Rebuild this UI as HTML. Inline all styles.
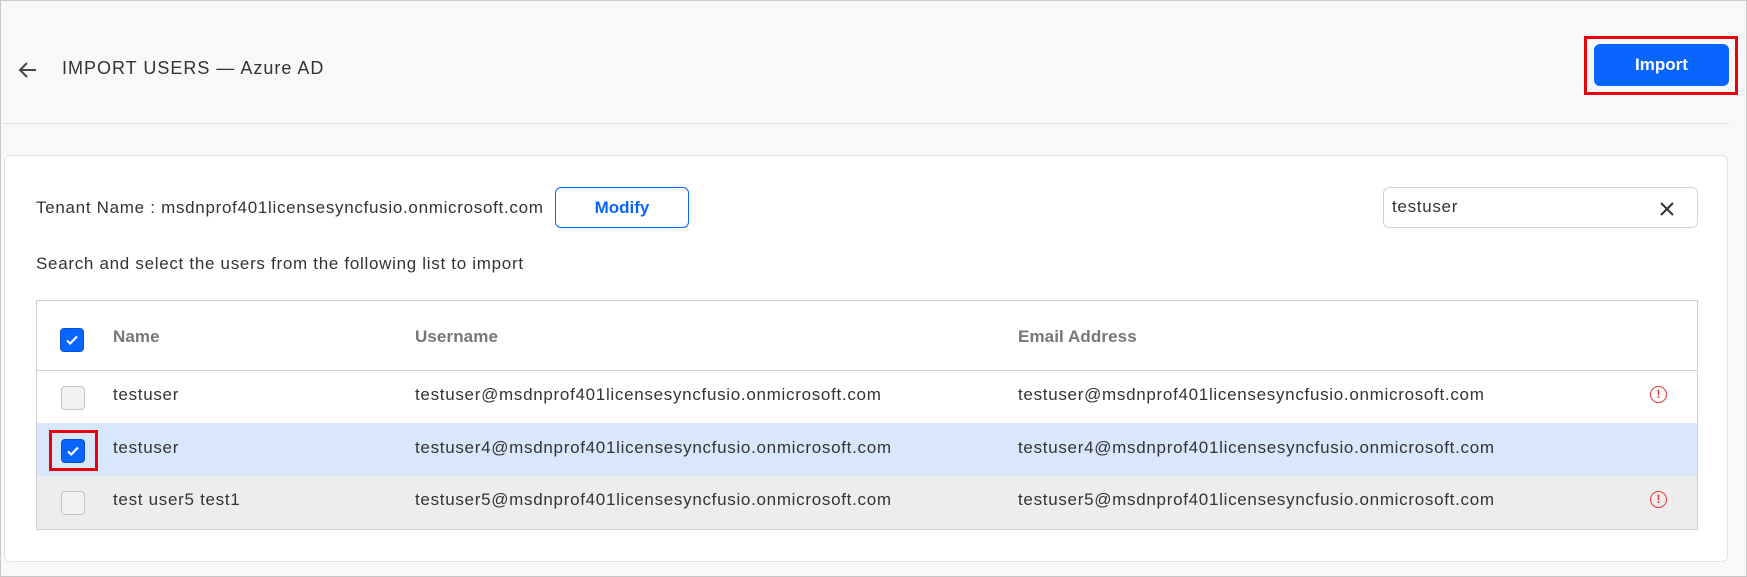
<!DOCTYPE html>
<html><head><style>
*{box-sizing:border-box;margin:0;padding:0}
body{width:1747px;height:577px;background:#fff;font-family:"Liberation Sans",Arial,sans-serif;color:#333;position:relative;overflow:hidden}
.frame{position:absolute;left:0;top:0;width:1747px;height:577px;border:1px solid #c8c8c8;background:#f8f8f8}
.abs{position:absolute}
.t{position:absolute;white-space:nowrap;font-size:17px;line-height:20px;letter-spacing:0.7px}
.h{color:#777;font-weight:bold;letter-spacing:0.1px}
.cb{position:absolute;width:24px;height:24px;border-radius:4px;border:1px solid #c4c4c4;background:#f2f2f2}
.cb.on{background:#0866ff;border-color:#0552d6}
.cb.on svg{position:absolute;left:3px;top:3px}
.warn{position:absolute;width:17px;height:17px;border:1.6px solid #e83a3a;border-radius:50%;color:#e83a3a;font-size:12px;line-height:14px;text-align:center;font-weight:bold}
</style></head><body>
<div class="frame"></div>
<svg class="abs" style="left:16px;top:58px" width="24" height="24" viewBox="0 0 24 24"><path d="M20 12H5M11 5l-7 7 7 7" fill="none" stroke="#444" stroke-width="2"/></svg>
<div class="t" style="left:62px;top:57px;font-size:18px;line-height:22px;letter-spacing:1px;color:#333">IMPORT USERS — Azure AD</div>
<div class="abs" style="left:3px;top:123px;width:1726px;height:1px;background:#e2e2e2"></div>
<div class="abs" style="left:1584px;top:36px;width:154px;height:59px;border:3px solid #e8000b"></div>
<div class="abs" style="left:1594px;top:44px;width:135px;height:42px;background:#0866ff;border-radius:6px;color:#fff;font-weight:bold;font-size:17px;line-height:42px;text-align:center">Import</div>
<div class="abs" style="left:4px;top:155px;width:1724px;height:407px;background:#fff;border:1px solid #e3e3e3;border-radius:6px"></div>
<div class="t" style="left:36px;top:198px">Tenant Name : msdnprof401licensesyncfusio.onmicrosoft.com</div>
<div class="abs" style="left:555px;top:187px;width:134px;height:41px;border:1px solid #0866ff;border-radius:6px;color:#0866ff;font-weight:bold;font-size:17px;line-height:39px;text-align:center">Modify</div>
<div class="abs" style="left:1383px;top:187px;width:315px;height:41px;border:1px solid #d3d3d3;border-radius:6px"></div>
<div class="t" style="left:1392px;top:197px">testuser</div>
<svg class="abs" style="left:1659px;top:201px" width="16" height="16" viewBox="0 0 16 16"><path d="M2 2L14 14M14 2L2 14" stroke="#333" stroke-width="2"/></svg>
<div class="t" style="left:36px;top:254px">Search and select the users from the following list to import</div>
<div class="abs" style="left:36px;top:300px;width:1662px;height:230px;border:1px solid #cfcfcf;background:#fff"></div>
<div class="abs" style="left:37px;top:370px;width:1660px;height:1px;background:#cfcfcf"></div>
<div class="abs" style="left:37px;top:423px;width:1660px;height:53px;background:#d9e7fc"></div>
<div class="abs" style="left:37px;top:476px;width:1660px;height:53px;background:#ededed"></div>
<div class="cb on" style="left:60px;top:328px"><svg width="16" height="16" viewBox="0 0 16 16"><path d="M3 8.5l3.2 3L13 4.5" fill="none" stroke="#fff" stroke-width="2.2"/></svg></div>
<div class="t h" style="left:113px;top:327px">Name</div>
<div class="t h" style="left:415px;top:327px">Username</div>
<div class="t h" style="left:1018px;top:327px">Email Address</div>
<div class="cb" style="left:61px;top:386px"></div>
<div class="t" style="left:113px;top:385px">testuser</div>
<div class="t" style="left:415px;top:385px">testuser@msdnprof401licensesyncfusio.onmicrosoft.com</div>
<div class="t" style="left:1018px;top:385px">testuser@msdnprof401licensesyncfusio.onmicrosoft.com</div>
<div class="warn" style="left:1650px;top:386px">!</div>
<div class="abs" style="left:49px;top:430px;width:49px;height:41px;border:3px solid #e8000b"></div>
<div class="cb on" style="left:61px;top:439px"><svg width="16" height="16" viewBox="0 0 16 16"><path d="M3 8.5l3.2 3L13 4.5" fill="none" stroke="#fff" stroke-width="2.2"/></svg></div>
<div class="t" style="left:113px;top:438px">testuser</div>
<div class="t" style="left:415px;top:438px">testuser4@msdnprof401licensesyncfusio.onmicrosoft.com</div>
<div class="t" style="left:1018px;top:438px">testuser4@msdnprof401licensesyncfusio.onmicrosoft.com</div>
<div class="cb" style="left:61px;top:491px"></div>
<div class="t" style="left:113px;top:490px">test user5 test1</div>
<div class="t" style="left:415px;top:490px">testuser5@msdnprof401licensesyncfusio.onmicrosoft.com</div>
<div class="t" style="left:1018px;top:490px">testuser5@msdnprof401licensesyncfusio.onmicrosoft.com</div>
<div class="warn" style="left:1650px;top:491px">!</div>
</body></html>
